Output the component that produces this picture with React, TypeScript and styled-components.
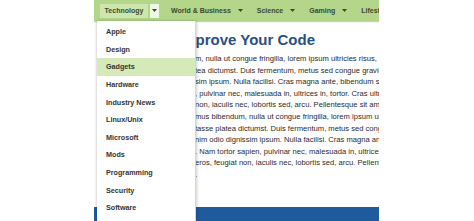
import React from "react";
import styled, { createGlobalStyle } from "styled-components";

const GlobalStyle = createGlobalStyle`
  html, body {
    margin: 0;
    padding: 0;
    background: #ffffff;
  }
  body {
    font-family: "Liberation Sans", Arial, sans-serif;
  }
`;

const NAV_ITEMS = ["World & Business", "Science", "Gaming", "Lifestyle"];

const MENU_ITEMS = [
  "Apple",
  "Design",
  "Gadgets",
  "Hardware",
  "Industry News",
  "Linux/Unix",
  "Microsoft",
  "Mods",
  "Programming",
  "Security",
  "Software",
];

const LINES = [
  "m, nulla ut congue fringilla, lorem ipsum ultricies risus,",
  "tea dictumst. Duis fermentum, metus sed congue gravida",
  "sim ipsum. Nulla facilisi. Cras magna ante, bibendum sit",
  ", pulvinar nec, malesuada in, ultrices in, tortor. Cras ultrices",
  "non, iaculis nec, lobortis sed, arcu. Pellentesque sit amet",
  "mus bibendum, nulla ut congue fringilla, lorem ipsum ultricies",
  "tasse platea dictumst. Duis fermentum, metus sed congue",
  "nim odio dignissim ipsum. Nulla facilisi. Cras magna ante",
  ". Nam tortor sapien, pulvinar nec, malesuada in, ultrices",
  "eros, feugiat non, iaculis nec, lobortis sed, arcu. Pellentesque",
  ".",
];

const Caret = () => (
  <svg width="5" height="3" viewBox="0 0 5 3">
    <path d="M0 0 L5 0 L2.5 3 Z" fill="#3b4a2c" />
  </svg>
);

export default function App() {
  return (
    <>
      <GlobalStyle />
      <Page>
        <Site>
          <NavBar>
            <ActiveTab>
              <ActiveLabel>Technology</ActiveLabel>
              <CaretBox>
                <Caret />
              </CaretBox>
            </ActiveTab>
            {NAV_ITEMS.map((item) => (
              <NavItem key={item}>
                <NavLabel>{item}</NavLabel>
                <Caret />
              </NavItem>
            ))}
          </NavBar>
          <Content>
            <Heading>Improve Your Code</Heading>
            <Body>
              {LINES.map((line, i) => (
                <Line key={i}>{line}</Line>
              ))}
            </Body>
          </Content>
          <Footer />
          <Dropdown>
            {MENU_ITEMS.map((item) => (
              <MenuItem key={item} active={item === "Gadgets"}>
                {item}
              </MenuItem>
            ))}
          </Dropdown>
        </Site>
      </Page>
    </>
  );
}

const Page = styled.div`
  width: 474px;
  height: 221px;
  display: flex;
  padding-left: 94px;
  box-sizing: border-box;
  overflow: hidden;
`;

const Site = styled.div`
  width: 285px;
  height: 221px;
  display: flex;
  flex-direction: column;
  position: relative;
  overflow: hidden;
`;

const NavBar = styled.div`
  height: 21px;
  flex-shrink: 0;
  background: #b3d68b;
  display: flex;
  align-items: center;
  padding-left: 6px;
  gap: 14px;
  box-shadow: 0 1px 1px rgba(90, 120, 60, 0.35);
  position: relative;
  z-index: 1;
`;

const ActiveTab = styled.div`
  display: flex;
  align-items: stretch;
  height: 14px;
  gap: 2px;
  margin-right: -2px;
`;

const ActiveLabel = styled.div`
  background: #cde6ae;
  width: 48px;
  display: flex;
  align-items: center;
  justify-content: center;
  font-size: 7px;
  font-weight: bold;
  color: #3b4a2c;
`;

const CaretBox = styled.div`
  width: 9px;
  background: #eef6e4;
  display: flex;
  align-items: center;
  justify-content: center;
`;

const NavItem = styled.div`
  display: flex;
  align-items: center;
  gap: 7px;
  white-space: nowrap;
`;

const NavLabel = styled.span`
  font-size: 7px;
  font-weight: bold;
  color: #3b4a2c;
`;

const Content = styled.div`
  flex: 1;
  padding: 10px 0 0 101px;
  overflow: hidden;
`;

const Heading = styled.h1`
  margin: 0 0 0 -17px;
  font-size: 15px;
  line-height: 18px;
  font-weight: bold;
  color: #2b4f80;
  white-space: nowrap;
`;

const Body = styled.div`
  margin-top: 4px;
`;

const Line = styled.div`
  font-size: 7.6px;
  line-height: 11.6px;
  color: #2a2a2a;
  white-space: nowrap;
`;

const Footer = styled.div`
  height: 14px;
  flex-shrink: 0;
  background: #1f5a9c;
`;

const Dropdown = styled.div`
  position: absolute;
  top: 21px;
  left: 3px;
  width: 98px;
  bottom: 0;
  background: #ffffff;
  padding-top: 2px;
  border-right: 1px solid #d6d6d6;
  box-shadow: 1px 0 3px rgba(0, 0, 0, 0.18), -1px 0 2px rgba(0, 0, 0, 0.12);
  z-index: 2;
`;

const MenuItem = styled.div<{ active?: boolean }>`
  height: 17.6px;
  display: flex;
  align-items: center;
  padding-left: 9px;
  font-size: 7.2px;
  font-weight: bold;
  color: #333;
  background: ${(p) => (p.active ? "#d5eab8" : "transparent")};
`;
